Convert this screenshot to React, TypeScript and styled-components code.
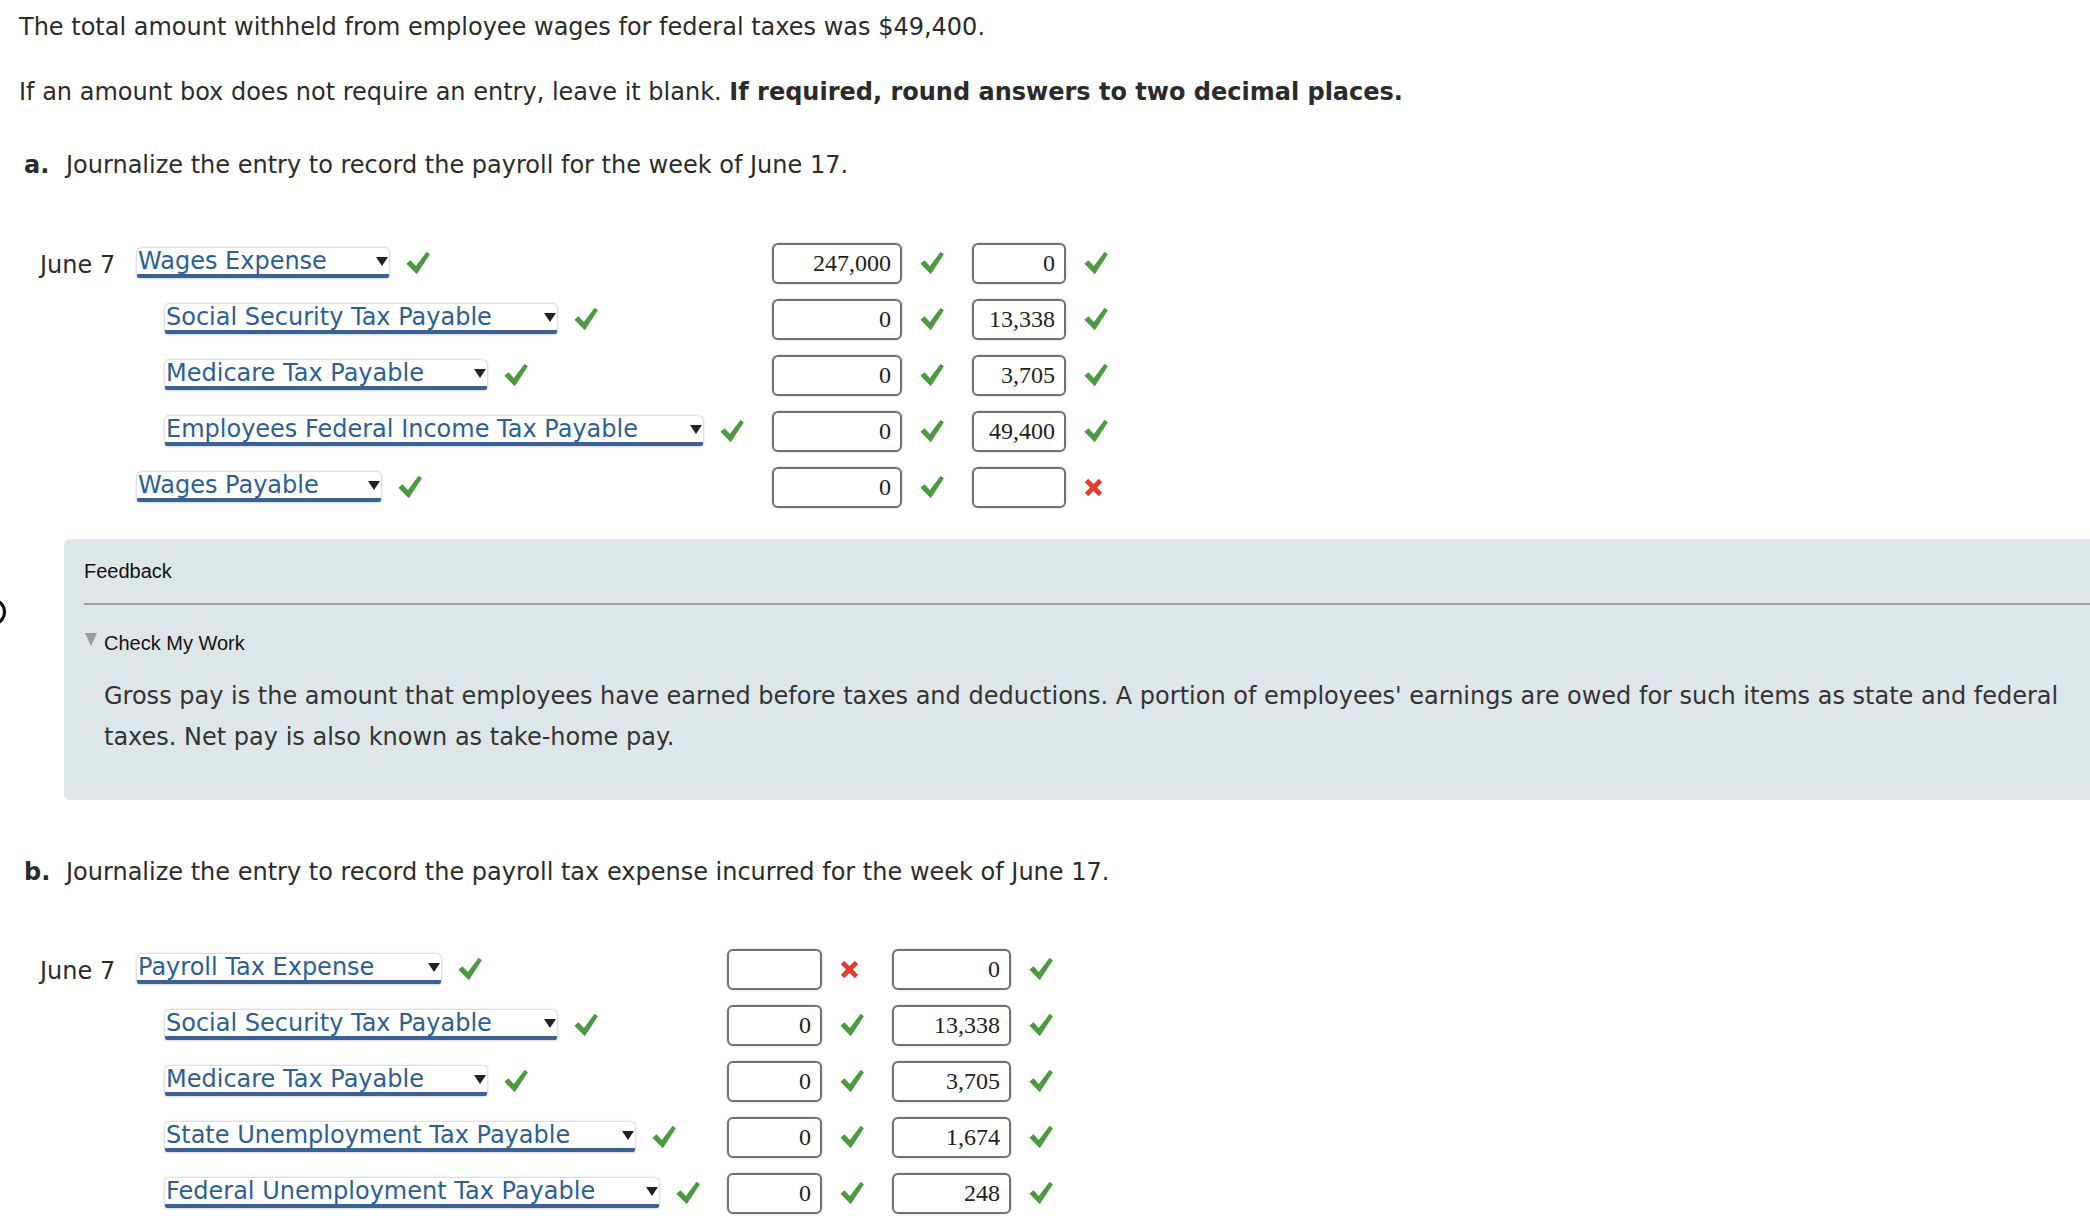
import styled, { createGlobalStyle } from 'styled-components';

const GlobalStyle = createGlobalStyle`
  html, body {
    margin: 0;
    padding: 0;
    background: #ffffff;
    overflow-x: hidden;
  }
`;

const Page = styled.div`
  font-family: "DejaVu Sans", Verdana, sans-serif;
  font-size: 24px;
  color: #2b2b2b;
  padding-top: 13px;
`;

const Prompt = styled.p<{ $gap: number }>`
  margin: 0 0 ${p => p.$gap}px 19px;
  line-height: 28px;
`;

const PartHeading = styled.div<{ $top?: number }>`
  display: flex;
  margin: ${p => p.$top || 0}px 0 0 24px;
  line-height: 28px;
`;

const PartLetter = styled.b`
  width: 42px;
`;

const Journal = styled.div<{ $top: number }>`
  margin: ${p => p.$top}px 0 0 40px;
`;

const JournalRow = styled.div<{ $account: number }>`
  display: grid;
  grid-template-columns: 97px ${p => p.$account}px auto auto;
  justify-content: start;
  align-items: center;
  height: 56px;
`;

const DateCell = styled.div`
  padding-top: 4px;
  line-height: 28px;
`;

const AccountCell = styled.div<{ $indent?: boolean }>`
  display: flex;
  align-items: center;
  padding-left: ${p => (p.$indent ? 28 : 0)}px;
`;

const AccountSelect = styled.div<{ $w: number }>`
  box-sizing: border-box;
  width: ${p => p.$w}px;
  height: 30px;
  display: flex;
  justify-content: space-between;
  align-items: flex-start;
  padding-left: 1px;
  background: #ffffff;
  border-radius: 5px 5px 2px 2px;
  border-bottom: 4px solid #3a6294;
  box-shadow: 0 0 3px rgba(0, 0, 0, 0.35);
  color: #2c5e97;
  line-height: 27px;
  white-space: nowrap;
`;

const SelectArrow = styled.span`
  width: 0;
  height: 0;
  margin: 9px 1px 0 0;
  border-left: 6.5px solid transparent;
  border-right: 6.5px solid transparent;
  border-top: 9px solid #222222;
`;

const AmountCell = styled.div`
  display: flex;
  align-items: center;
`;

const AmountBox = styled.div<{ $w: number }>`
  box-sizing: border-box;
  width: ${p => p.$w}px;
  height: 41px;
  padding-right: 9px;
  border: 2px solid #717171;
  border-radius: 6px;
  box-shadow: 0 0 2px rgba(0, 0, 0, 0.3);
  font-family: "Liberation Serif", "Times New Roman", serif;
  font-size: 24px;
  line-height: 37px;
  text-align: right;
  color: #222222;
`;

const MarkSlot = styled.span<{ $after?: number }>`
  display: flex;
  align-items: center;
  width: 26px;
  margin: 0 ${p => p.$after ?? 26}px 0 18px;
`;

const SelectMark = styled.span`
  display: flex;
  margin-left: 17px;
`;

const FeedbackRow = styled.div`
  display: flex;
  margin-top: 24px;
`;

const Gutter = styled.div`
  flex: 0 0 64px;
`;

const Ring = styled.div`
  box-sizing: border-box;
  width: 28px;
  height: 28px;
  margin: 59px 0 0 -22px;
  border: 3px solid #111111;
  border-radius: 50%;
`;

const FeedbackBox = styled.section`
  flex: 1;
  padding: 21px 0 42px 20px;
  background: #dfe6e9;
  border-radius: 6px 0 0 6px;
`;

const FeedbackTitle = styled.div`
  font-family: "Liberation Sans", Arial, sans-serif;
  font-size: 20px;
  line-height: 23px;
  color: #111111;
`;

const Divider = styled.hr`
  margin: 20px 0 0;
  border: 0;
  height: 2px;
  background: #9a9fa3;
`;

const Disclosure = styled.div`
  display: flex;
  align-items: flex-start;
  margin-top: 27px;
  font-family: "Liberation Sans", Arial, sans-serif;
  font-size: 20px;
  line-height: 23px;
  color: #111111;
`;

const DisclosureArrow = styled.span`
  width: 0;
  height: 0;
  margin: 1px 7px 0 1px;
  border-left: 6px solid transparent;
  border-right: 6px solid transparent;
  border-top: 13px solid #9b9b9b;
`;

const Explanation = styled.p`
  margin: 21px 0 0;
  padding-left: 20px;
  line-height: 41px;
  color: #333333;
`;

const Check = () => (
  <svg width="24" height="24" viewBox="0 0 24 24">
    <path d="M0.4 12.8 L4.4 9.2 L9.9 15 L20.6 0.8 L23.9 3.3 L10.8 23.2 Z" fill="#4c9a3f" />
  </svg>
);

const Cross = () => (
  <svg width="19" height="19" viewBox="0 0 19 19">
    <path d="M2.5 2.5 L16.5 16.5 M16.5 2.5 L2.5 16.5" stroke="#e63b2b" strokeWidth="4.8" />
  </svg>
);

type Line = {
  account: string;
  width: number;
  credit?: boolean;
  debit: string;
  debitOk: boolean;
  creditAmt: string;
  creditOk: boolean;
};

type Entry = {
  accountCol: number;
  debitW: number;
  creditW: number;
  lines: Line[];
};

const payroll: Entry = {
  accountCol: 635,
  debitW: 130,
  creditW: 94,
  lines: [
    { account: 'Wages Expense', width: 252, debit: '247,000', debitOk: true, creditAmt: '0', creditOk: true },
    { account: 'Social Security Tax Payable', width: 392, credit: true, debit: '0', debitOk: true, creditAmt: '13,338', creditOk: true },
    { account: 'Medicare Tax Payable', width: 322, credit: true, debit: '0', debitOk: true, creditAmt: '3,705', creditOk: true },
    { account: 'Employees Federal Income Tax Payable', width: 538, credit: true, debit: '0', debitOk: true, creditAmt: '49,400', creditOk: true },
    { account: 'Wages Payable', width: 244, debit: '0', debitOk: true, creditAmt: '', creditOk: false },
  ],
};

const payrollTax: Entry = {
  accountCol: 590,
  debitW: 95,
  creditW: 119,
  lines: [
    { account: 'Payroll Tax Expense', width: 304, debit: '', debitOk: false, creditAmt: '0', creditOk: true },
    { account: 'Social Security Tax Payable', width: 392, credit: true, debit: '0', debitOk: true, creditAmt: '13,338', creditOk: true },
    { account: 'Medicare Tax Payable', width: 322, credit: true, debit: '0', debitOk: true, creditAmt: '3,705', creditOk: true },
    { account: 'State Unemployment Tax Payable', width: 470, credit: true, debit: '0', debitOk: true, creditAmt: '1,674', creditOk: true },
    { account: 'Federal Unemployment Tax Payable', width: 494, credit: true, debit: '0', debitOk: true, creditAmt: '248', creditOk: true },
  ],
};

const JournalEntry = ({ entry, top }: { entry: Entry; top: number }) => (
  <Journal $top={top}>
    {entry.lines.map((line, i) => (
      <JournalRow key={line.account} $account={entry.accountCol}>
        <DateCell>{i === 0 ? 'June 7' : ''}</DateCell>
        <AccountCell $indent={line.credit}>
          <AccountSelect $w={line.width}>
            {line.account}
            <SelectArrow />
          </AccountSelect>
          <SelectMark>
            <Check />
          </SelectMark>
        </AccountCell>
        <AmountCell>
          <AmountBox $w={entry.debitW}>{line.debit}</AmountBox>
          <MarkSlot>{line.debitOk ? <Check /> : <Cross />}</MarkSlot>
        </AmountCell>
        <AmountCell>
          <AmountBox $w={entry.creditW}>{line.creditAmt}</AmountBox>
          <MarkSlot $after={0}>{line.creditOk ? <Check /> : <Cross />}</MarkSlot>
        </AmountCell>
      </JournalRow>
    ))}
  </Journal>
);

const App = () => {
  return (
    <Page>
      <GlobalStyle />
      <Prompt $gap={37}>The total amount withheld from employee wages for federal taxes was $49,400.</Prompt>
      <Prompt $gap={45}>
        If an amount box does not require an entry, leave it blank.{' '}
        <b>If required, round answers to two decimal places.</b>
      </Prompt>

      <PartHeading>
        <PartLetter>a.</PartLetter>
        <span>Journalize the entry to record the payroll for the week of June 17.</span>
      </PartHeading>
      <JournalEntry entry={payroll} top={56} />

      <FeedbackRow>
        <Gutter>
          <Ring />
        </Gutter>
        <FeedbackBox>
          <FeedbackTitle>Feedback</FeedbackTitle>
          <Divider />
          <Disclosure>
            <DisclosureArrow />
            Check My Work
          </Disclosure>
          <Explanation>
            Gross pay is the amount that employees have earned before taxes and deductions. A portion of
            employees' earnings are owed for such items as state and federal taxes. Net pay is also known as
            take-home pay.
          </Explanation>
        </FeedbackBox>
      </FeedbackRow>

      <PartHeading $top={58}>
        <PartLetter>b.</PartLetter>
        <span>Journalize the entry to record the payroll tax expense incurred for the week of June 17.</span>
      </PartHeading>
      <JournalEntry entry={payrollTax} top={55} />
    </Page>
  );
};

export default App;
